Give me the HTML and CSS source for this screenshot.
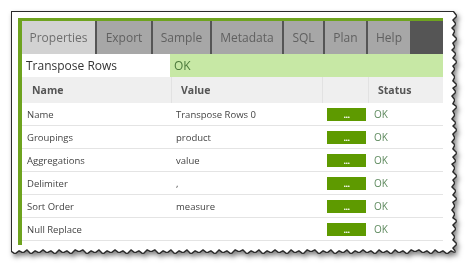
FILE: index.html
```html
<!DOCTYPE html>
<html>
<head>
<meta charset="utf-8">
<link rel="stylesheet" href="styles.css">
</head>
<body>
<div class="frame">
  <div class="paper">
    <div class="panel">
      <div class="tabs">
        <div class="tab active w-prop">Properties</div>
        <div class="tab w-export">Export</div>
        <div class="tab w-sample">Sample</div>
        <div class="tab w-meta">Metadata</div>
        <div class="tab w-sql">SQL</div>
        <div class="tab w-plan">Plan</div>
        <div class="tab w-help">Help</div>
      </div>
      <div class="title-row">
        <div class="title">Transpose Rows</div>
        <div class="title-status">OK</div>
      </div>
      <div class="grid">
        <div class="hd">Name</div><div class="hd">Value</div><div class="hd"></div><div class="hd last">Status</div>

        <div class="cell">Name</div><div class="cell">Transpose Rows 0</div><div class="cell btn-cell"><span class="btn">...</span></div><div class="cell ok">OK</div>
        <div class="cell">Groupings</div><div class="cell">product</div><div class="cell btn-cell"><span class="btn">...</span></div><div class="cell ok">OK</div>
        <div class="cell">Aggregations</div><div class="cell">value</div><div class="cell btn-cell"><span class="btn">...</span></div><div class="cell ok">OK</div>
        <div class="cell">Delimiter</div><div class="cell">,</div><div class="cell btn-cell"><span class="btn">...</span></div><div class="cell ok">OK</div>
        <div class="cell">Sort Order</div><div class="cell">measure</div><div class="cell btn-cell"><span class="btn">...</span></div><div class="cell ok">OK</div>
        <div class="cell">Null Replace</div><div class="cell"></div><div class="cell btn-cell"><span class="btn">...</span></div><div class="cell ok">OK</div>
      </div>
    </div>
  </div>
</div>
</body>
</html>
```
FILE: styles.css
```css
* { box-sizing: border-box; }
html, body { margin: 0; padding: 0; background: #fff; }
body {
  font-family: "Open Sans", "Liberation Sans", sans-serif;
  width: 474px;
  height: 274px;
  overflow: hidden;
}
.frame {
  margin: 12px 0 0 12px;
  width: 450px;
  height: 248px;
  filter: drop-shadow(-1px 0 0 #2a2a2a) drop-shadow(0 -1px 0 #2a2a2a) drop-shadow(1px 0 0 #2a2a2a) drop-shadow(0 1px 0 #2a2a2a) drop-shadow(2px 3px 2.5px rgba(0,0,0,0.5));
}
.paper {
  background: #fff;
  width: 445px;
  height: 243px;
  padding: 6px 0 0 6px;
  clip-path: polygon(0 0, 441px 0,
    444px 4px, 440px 8px, 443px 12px, 439px 16px, 442px 19px, 440px 23px, 444px 27px, 440px 31px,
    442px 35px, 439px 38px, 443px 42px, 440px 46px, 444px 50px, 440px 54px, 442px 57px, 439px 61px,
    442px 65px, 440px 69px, 444px 73px, 440px 76px, 443px 80px, 439px 84px, 442px 88px, 440px 92px,
    444px 95px, 440px 99px, 442px 103px, 439px 107px, 443px 111px, 440px 114px, 444px 118px, 440px 122px,
    442px 126px, 439px 130px, 442px 133px, 440px 137px, 444px 141px, 440px 145px, 443px 149px, 439px 152px,
    442px 156px, 440px 160px, 444px 164px, 440px 168px, 442px 171px, 439px 175px, 443px 179px, 440px 183px,
    444px 187px, 440px 190px, 442px 194px, 439px 198px, 442px 202px, 440px 206px, 444px 209px, 440px 213px,
    443px 217px, 439px 221px, 442px 225px, 440px 228px, 444px 232px, 440px 236px, 443px 240px,
    439px 238px, 435px 241px, 431px 238px, 427px 240px, 423px 237px, 419px 241px, 415px 238px, 411px 240px,
    407px 237px, 403px 239px, 399px 237px, 395px 241px, 391px 238px, 387px 240px, 383px 237px, 379px 241px,
    375px 238px, 371px 240px, 367px 237px, 363px 241px, 359px 238px, 355px 240px, 351px 237px, 347px 240px,
    343px 238px, 339px 241px, 335px 237px, 331px 240px, 327px 238px, 323px 241px, 319px 237px, 315px 240px,
    311px 238px, 307px 241px, 303px 237px, 299px 239px, 295px 237px, 291px 241px, 287px 238px, 283px 240px,
    279px 237px, 275px 241px, 271px 238px, 267px 240px, 263px 237px, 259px 240px, 255px 238px, 251px 241px,
    247px 237px, 243px 240px, 239px 238px, 235px 241px, 231px 237px, 227px 239px, 223px 237px, 219px 241px,
    215px 238px, 211px 240px, 207px 237px, 203px 241px, 199px 238px, 195px 240px, 191px 237px, 187px 240px,
    183px 238px, 179px 241px, 175px 237px, 171px 240px, 167px 238px, 163px 241px, 159px 237px, 155px 240px,
    151px 238px, 147px 241px, 143px 237px, 139px 239px, 135px 237px, 131px 241px, 127px 238px, 123px 240px,
    119px 237px, 115px 241px, 111px 238px, 107px 240px, 103px 237px, 99px 240px, 95px 238px, 91px 241px,
    87px 237px, 83px 240px, 79px 238px, 75px 241px, 71px 237px, 67px 239px, 63px 237px, 59px 241px,
    55px 238px, 51px 240px, 47px 237px, 43px 241px, 39px 238px, 35px 240px, 31px 237px, 27px 240px,
    23px 238px, 19px 241px, 15px 237px, 11px 240px, 7px 238px, 3px 241px, 0 239px);
}
.panel {
  width: 425px;
  height: 227px;
  border-left: 4px solid #6ea31f;
  border-top: 3px solid #6ea31f;
  background: #fff;
}
.tabs {
  display: flex;
  height: 33px;
  background: #555;
}
.tab {
  height: 33px;
  border-right: 2px solid #555;
  background: #a7a7a7;
  color: #606060;
  font-size: 12px;
  display: flex;
  align-items: center;
  justify-content: center;
}
.tab.active { background: #d2d2d2; color: #6e6e6e; }
.w-prop { width: 75px; }
.w-export { width: 56px; }
.w-sample { width: 59px; }
.w-meta { width: 72px; }
.w-sql { width: 41px; }
.w-plan { width: 43px; }
.w-help { width: 44px; }
.title-row {
  display: flex;
  height: 23px;
}
.title {
  width: 148px;
  background: #fff;
  color: #333;
  font-size: 12px;
  padding-left: 4px;
  display: flex;
  align-items: center;
}
.title-status {
  flex: 1;
  background: #c7e8a5;
  color: #4d7a3c;
  font-size: 12px;
  padding-left: 4px;
  display: flex;
  align-items: center;
}
.grid {
  display: grid;
  grid-template-columns: 149px 151px 46px 75px;
  grid-auto-rows: 23px;
  grid-template-rows: 26px;
}
.hd {
  background: #efefef;
  border-left: 1px solid #e2e2e2;
  color: #555;
  font-weight: bold;
  font-size: 10.5px;
  padding-left: 9px;
  display: flex;
  align-items: center;
}
.hd:first-child { border-left: none; padding-left: 10px; }
.cell {
  border-bottom: 1px solid #e4e4e4;
  color: #444;
  font-size: 9.5px;
  padding-left: 5px;
  display: flex;
  align-items: center;
}
.btn-cell { padding-left: 5px; }
.btn {
  width: 39px;
  height: 13px;
  background: #5e9a00;
  color: #fff;
  font-size: 9px;
  font-weight: bold;
  line-height: 13px;
  text-align: center;
  letter-spacing: -0.5px;
}
.ok { color: #5e8a5e; padding-left: 6px; font-size: 10px; }
```
